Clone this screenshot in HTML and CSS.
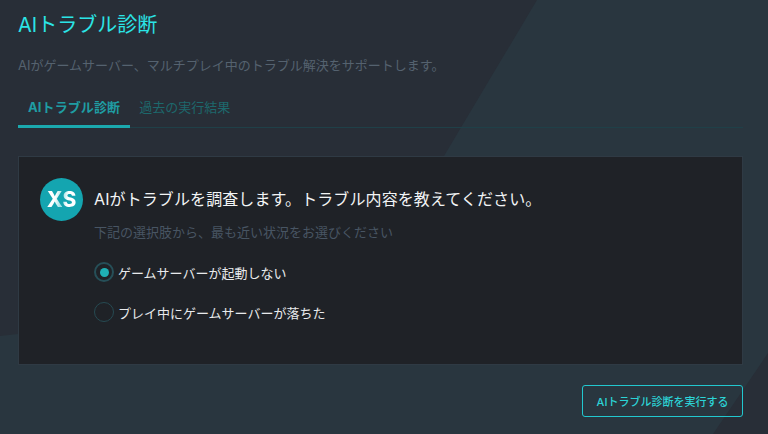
FILE: index.html
```html
<!DOCTYPE html>
<html lang="ja">
<head>
<meta charset="utf-8">
<title>AIトラブル診断</title>
<link rel="stylesheet" href="styles.css">
</head>
<body>
<div class="page">
  <svg class="bg" viewBox="0 0 768 434" preserveAspectRatio="none" aria-hidden="true">
    <polygon class="bg-band" points="537,0 768,0 768,353 713,434 0,434 0,336 18,334 444,156"/>
  </svg>
  <main class="content">
    <h1 class="title">AIトラブル診断</h1>
    <p class="lead">AIがゲームサーバー、マルチプレイ中のトラブル解決をサポートします。</p>
    <nav class="tabs">
      <span class="tab tab-active">AIトラブル診断</span>
      <span class="tab tab-next">過去の実行結果</span>
    </nav>
    <section class="card">
      <div class="avatar"><span class="avatar-text">XS</span></div>
      <div class="body">
        <h2 class="question">AIがトラブルを調査します。トラブル内容を教えてください。</h2>
        <p class="hint">下記の選択肢から、最も近い状況をお選びください</p>
        <div class="options">
          <label class="option"><span class="radio radio-on"></span>ゲームサーバーが起動しない</label>
          <label class="option"><span class="radio"></span>プレイ中にゲームサーバーが落ちた</label>
        </div>
      </div>
    </section>
    <div class="actions"><button class="run">AIトラブル診断を実行する</button></div>
  </main>
</div>
</body>
</html>
```
FILE: styles.css
```css
* { box-sizing: border-box; }
html, body { margin: 0; height: 100%; }
body {
  background: #282e37;
  color: #fff;
  font-family: "Inter", "Noto Sans CJK JP", sans-serif;
  overflow: hidden;
}
.page { position: relative; width: 768px; height: 434px; overflow: hidden; }
.bg { position: absolute; inset: 0; width: 100%; height: 100%; }
.bg-band { fill: #29363f; }
.content { position: relative; padding: 11px 25px 0 18px; }
.title { margin: 0; font-size: 20px; line-height: 28px; font-weight: 400; color: #2be4e6; }
.lead { margin: 16px 0 0; font-size: 13px; line-height: 20px; color: #55626f; }
.tabs { display: flex; margin-top: 16px; height: 37px; border-bottom: 1px solid #1f4048; padding-top: 3px; }
.tab { padding: 0 10px; font-size: 13px; line-height: 26px; color: #1d686c; }
.tab-active { height: 34px; border-bottom: 3px solid #1ba9ae; font-weight: 700; color: #1f9da3; letter-spacing: 0.1px; }
.tab-next { padding-left: 9px; }
.card {
  display: flex; gap: 11px;
  margin-top: 28px; height: 209px; padding: 21px 21px;
  background: #1f2227; border: 1px solid #2f3a44;
}
.avatar {
  flex: none; width: 43px; height: 43px; border-radius: 50%;
  background: #14a5b0;
  font-size: 21px; font-weight: 800; line-height: 43px; text-align: center;
}
.avatar-text {
  background: linear-gradient(100deg, #ffffff 30%, #9adfe3 50%, #ffffff 68%);
  -webkit-background-clip: text; background-clip: text;
  color: transparent;
}
.question { margin: 10px 0 0; font-size: 16px; line-height: 22px; font-weight: 400; color: #f2f4f5; letter-spacing: 0.1px; }
.hint { margin: 12px 0 0; font-size: 13px; line-height: 20px; color: #485563; }
.options { display: flex; flex-direction: column; gap: 20px; margin-top: 20px; }
.option { display: flex; align-items: center; gap: 4px; height: 20px; font-size: 13px; color: #e8eaec; }
.radio {
  flex: none; width: 20px; height: 20px; border-radius: 50%;
  border: 1.5px solid #264a52; display: flex; align-items: center; justify-content: center;
}
.radio-on { border-width: 2px; border-color: #264f58; }
.radio-on::after { content: ""; width: 9px; height: 9px; border-radius: 50%; background: #1fb0b5; }
.actions { display: flex; justify-content: flex-end; margin-top: 20px; }
.run {
  width: 161px; height: 32px; padding: 0;
  background: transparent; border: 1px solid #22c8cf; border-radius: 3px;
  font: 500 11px "Inter", "Noto Sans CJK JP", sans-serif; color: #2cd3d6;
}
```
